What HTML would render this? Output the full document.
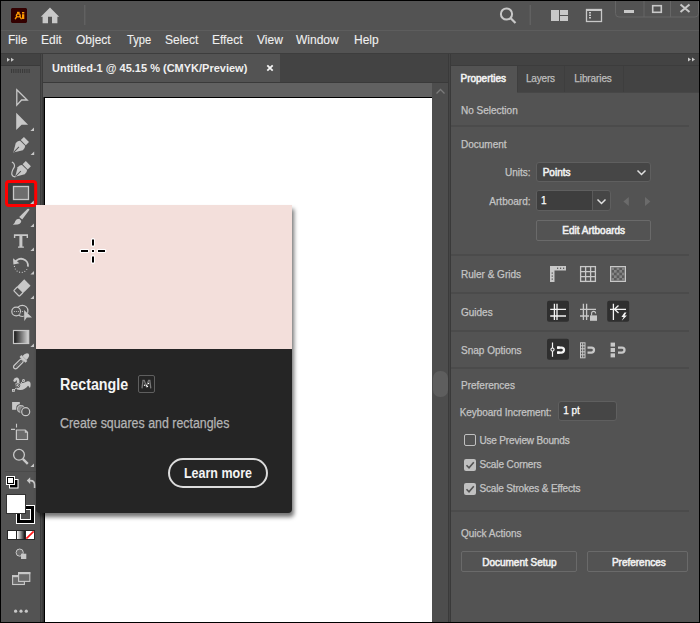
<!DOCTYPE html>
<html><head><meta charset="utf-8">
<style>
*{margin:0;padding:0;box-sizing:border-box}
html,body{width:700px;height:623px;overflow:hidden;background:#000}
body{position:relative;font-family:"Liberation Sans",sans-serif;color:#d4d4d4}
.a{position:absolute}
#app{position:absolute;left:1px;top:1px;width:698px;height:621px;background:#535353;overflow:hidden}
.t{position:absolute;white-space:nowrap;line-height:1;-webkit-text-stroke:0.25px currentColor}
</style></head><body>
<div id="app"></div>

<!-- title bar -->
<div class="a" style="left:1px;top:1px;width:698px;height:29px;background:#535353"></div>
<div class="a" style="left:1px;top:30px;width:698px;height:1px;background:#5d5d5d"></div>
<svg class="a" style="left:0;top:0" width="700" height="31" viewBox="0 0 700 31">
<path d="M12 8h14l1 1v13l-1 1h-14l-1-1v-13z" fill="#330000"/>
<rect x="17" y="11.8" width="2.6" height="2" fill="#ff9a00"/><ellipse cx="18.3" cy="15.4" rx="2" ry="1.5" fill="none" stroke="#ff9a00" stroke-width="1.3"/><path d="M16.9 16.4L15.4 18.6M19.7 16.4L21.2 18.6" stroke="#ff9a00" stroke-width="1.5" stroke-linecap="round"/>
<rect x="22" y="12" width="2.3" height="1.5" fill="#ff9a00"/><rect x="22" y="14.2" width="2.3" height="4.8" fill="#ff9a00"/>
<path d="M50 7.5l9.2 9.3h-1.8v6.4h-5.4v-6.4h-4v6.4h-5.4v-6.4h-1.8z" fill="#c8c8c8"/>
<rect x="84" y="5" width="1.5" height="20" fill="#616161"/>
<circle cx="506.5" cy="14" r="5.6" fill="none" stroke="#c8c8c8" stroke-width="2"/>
<path d="M510.5 18l5 5" stroke="#c8c8c8" stroke-width="2.2"/>
<rect x="529.5" y="5" width="1.5" height="20" fill="#616161"/>
<rect x="551" y="10" width="8" height="11" fill="#c8c8c8"/>
<rect x="560" y="10" width="8" height="5" fill="#c8c8c8"/>
<rect x="560" y="16" width="8" height="5" fill="#c8c8c8"/>
<rect x="586.5" y="9.5" width="15" height="12" fill="none" stroke="#c8c8c8" stroke-width="1.3"/>
<rect x="586" y="9" width="16" height="2" fill="#c8c8c8"/>
<rect x="589" y="12" width="2" height="1.5" fill="#c8c8c8"/><rect x="589" y="14.5" width="2" height="1.5" fill="#c8c8c8"/><rect x="589" y="17" width="2" height="1.5" fill="#c8c8c8"/>
<path d="M615.5 1v12.5a3.5 3.5 0 0 0 3.5 3.5h76a3.5 3.5 0 0 0 3.5-3.5v-12.5" fill="none" stroke="#666" stroke-width="1"/>
<rect x="643.5" y="1" width="1" height="16" fill="#666"/>
<rect x="670" y="1" width="1" height="16" fill="#666"/>
<rect x="624" y="10" width="10" height="3" fill="#c8c8c8"/>
<rect x="652.7" y="5.7" width="8.6" height="6.6" fill="none" stroke="#c8c8c8" stroke-width="1.6"/>
<path d="M680.5 4.5l9 7.5M689.5 4.5l-9 7.5" stroke="#c8c8c8" stroke-width="2"/>
</svg>
<!-- menu bar -->
<div class="a" style="left:1px;top:31px;width:698px;height:22px;background:#535353"></div>
<div class="t" style="left:8px;top:34px;font-size:12px;color:#f0f0f0;-webkit-text-stroke:0.1px currentColor">File</div>
<div class="t" style="left:41px;top:34px;font-size:12px;color:#f0f0f0;-webkit-text-stroke:0.1px currentColor">Edit</div>
<div class="t" style="left:76px;top:34px;font-size:12px;color:#f0f0f0;-webkit-text-stroke:0.1px currentColor">Object</div>
<div class="t" style="left:127px;top:34px;font-size:12px;color:#f0f0f0;-webkit-text-stroke:0.1px currentColor;transform:scaleX(.93);transform-origin:0 0">Type</div>
<div class="t" style="left:165px;top:34px;font-size:12px;color:#f0f0f0;-webkit-text-stroke:0.1px currentColor">Select</div>
<div class="t" style="left:212px;top:34px;font-size:12px;color:#f0f0f0;-webkit-text-stroke:0.1px currentColor">Effect</div>
<div class="t" style="left:257px;top:34px;font-size:12px;color:#f0f0f0;-webkit-text-stroke:0.1px currentColor">View</div>
<div class="t" style="left:296px;top:34px;font-size:12px;color:#f0f0f0;-webkit-text-stroke:0.1px currentColor">Window</div>
<div class="t" style="left:354px;top:34px;font-size:12px;color:#f0f0f0;-webkit-text-stroke:0.1px currentColor">Help</div>

<!-- toolbar -->
<div class="a" style="left:1px;top:53px;width:39px;height:12px;background:#434343"></div>
<div class="a" style="left:1px;top:65px;width:39px;height:1px;background:#3a3a3a"></div>
<div class="a" style="left:40px;top:53px;width:4px;height:569px;background:#494949;border-left:1px solid #3c3c3c;border-right:2px solid #3c3c3c"></div>

<svg class="a" style="left:0;top:0" width="45" height="623" viewBox="0 0 45 623">
<path d="M7 57.8l3 2l-3 2zM11 57.8l3 2l-3 2z" fill="#c8c8c8"/>
<g fill="#3a3a3a"><rect x="11.0" y="69" width="1.1" height="4"/><rect x="13.2" y="69" width="1.1" height="4"/><rect x="15.4" y="69" width="1.1" height="4"/><rect x="17.6" y="69" width="1.1" height="4"/><rect x="19.8" y="69" width="1.1" height="4"/><rect x="22.0" y="69" width="1.1" height="4"/><rect x="24.2" y="69" width="1.1" height="4"/><rect x="26.4" y="69" width="1.1" height="4"/><rect x="28.6" y="69" width="1.1" height="4"/></g>
<!-- selection -->
<path d="M16.8 89.8L27.2 100H21.6L16.8 105.2Z" fill="none" stroke="#c8c8c8" stroke-width="1.3" stroke-linejoin="miter"/>
<!-- direct selection -->
<path d="M16.2 112.8L28.1 124.7H21.6L16.2 130.1Z" fill="#c8c8c8"/>
<path d="M34 127.4v3.6h-3.6z" fill="#c8c8c8"/>
<!-- pen -->
<g transform="translate(13.3 152.6) rotate(45)">
<path d="M0 0L-5 -8.5Q-5.2 -11.8 -3.6 -13.2H3.6Q5.2 -11.8 5 -8.5Z" fill="#c8c8c8"/>
<rect x="-3.6" y="-18.6" width="7.2" height="4.5" fill="#c8c8c8"/>
<path d="M0 -0.8V-8" stroke="#535353" stroke-width="1"/>
</g>
<path d="M34.2 151.4v3.6h-3.6z" fill="#c8c8c8"/>
<!-- curvature -->
<g transform="translate(15.2 176.8) rotate(45)">
<path d="M0 0L-5 -8.5Q-5.2 -11.8 -3.6 -13.2H3.6Q5.2 -11.8 5 -8.5Z" fill="#c8c8c8"/>
<rect x="-3.6" y="-18.6" width="7.2" height="4.5" fill="#c8c8c8"/>
<path d="M0 -0.8V-8" stroke="#535353" stroke-width="1"/>
</g>
<path d="M12.3 162.2Q15.2 164 14.3 167.2Q11.2 172 11.9 174.8Q12.6 176.7 15 176.8" fill="none" stroke="#c8c8c8" stroke-width="1.2" stroke-linecap="round"/>
<!-- red selected box -->
<rect x="6.5" y="181.5" width="29.2" height="24" rx="2.5" fill="#3b3b3b" stroke="#ff0000" stroke-width="3"/>
<rect x="13.5" y="186.5" width="15" height="13" fill="#6d6d6d" stroke="#c8c8c8" stroke-width="1.3"/>
<path d="M33.8 200.4v3.6h-3.6z" fill="#c8c8c8"/>
<!-- brush -->
<path d="M27.4 209Q29 208.3 29.5 209.8L22.2 219.6L19.2 216.9Z" fill="#c8c8c8"/>
<path d="M19.3 218.8L21.2 220.7Q21.5 223.5 17.5 224.5L12.8 224.8Q15 223.3 15.3 221Q16.3 218.8 19.3 218.8Z" fill="#c8c8c8"/>
<path d="M34 223.4v3.6h-3.6z" fill="#c8c8c8"/>
<!-- type -->
<path d="M13.9 234.2H28V237.9H26.6V235.9H22.4V246.4H23.9V247.8H18V246.4H19.4V235.9H15.3V237.9H13.9Z" fill="#c8c8c8"/>
<path d="M34 247.4v3.6h-3.6z" fill="#c8c8c8"/>
<!-- rotate -->
<path d="M15.04 262.73A6.8 6.8 0 0 1 27.93 266.55" fill="none" stroke="#c8c8c8" stroke-width="1.9"/>
<path d="M13 258.3L13.4 264.6L19.4 263.2Z" fill="#c8c8c8"/>
<g fill="#c8c8c8"><circle cx="26.77" cy="269.50" r="0.6"/><circle cx="24.80" cy="271.37" r="0.6"/><circle cx="22.26" cy="272.32" r="0.6"/><circle cx="19.55" cy="272.20" r="0.6"/><circle cx="17.11" cy="271.03" r="0.6"/><circle cx="15.31" cy="269.00" r="0.6"/><circle cx="14.45" cy="266.43" r="0.6"/></g>
<path d="M34 274.5v-3.6h0v3.6h-3.6z" fill="#c8c8c8"/><path d="M34 270.9v3.6h-3.6z" fill="#c8c8c8"/>
<!-- eraser -->
<g transform="translate(21.4 288.5) rotate(45)">
<rect x="-4.5" y="-8.5" width="9" height="10" fill="#c8c8c8"/>
<rect x="-4" y="1.5" width="8" height="5.5" rx="0.8" fill="none" stroke="#c8c8c8" stroke-width="1.2"/>
</g>
<path d="M34 295.4v3.6h-3.6z" fill="#c8c8c8"/>
<!-- shape builder -->
<circle cx="22.3" cy="310.9" r="5.6" fill="none" stroke="#c8c8c8" stroke-width="1.2"/>
<circle cx="16.2" cy="311.5" r="4.4" fill="#535353" stroke="#c8c8c8" stroke-width="1.2"/>
<path d="M20.2 307.8A4.4 4.4 0 0 1 19.5 314.6" fill="none" stroke="#535353" stroke-width="0.6"/>
<g fill="#c8c8c8"><circle cx="14.4" cy="311.5" r=".6"/><circle cx="16.4" cy="311.5" r=".6"/><circle cx="18.4" cy="311.5" r=".6"/><circle cx="20.5" cy="311.5" r=".6"/><circle cx="22.5" cy="311.5" r=".6"/></g>
<path d="M24.1 310.1L32 317.5H26.8L24.3 321.1Z" fill="#c8c8c8" stroke="#535353" stroke-width="0.8" paint-order="stroke"/>
<!-- gradient -->
<defs><linearGradient id="gr" x1="0" x2="1"><stop offset="0" stop-color="#111"/><stop offset="1" stop-color="#d8d8d8"/></linearGradient></defs>
<rect x="13.5" y="330.5" width="15.2" height="13" fill="url(#gr)" stroke="#c8c8c8" stroke-width="1.2"/>
<path d="M34 343.4v3.6h-3.6z" fill="#c8c8c8"/>
<!-- eyedropper -->
<g transform="translate(13.4 369) rotate(45)">
<rect x="-2" y="-13" width="4" height="12" rx="2" fill="none" stroke="#c8c8c8" stroke-width="1.2"/>
<rect x="-4.2" y="-15.5" width="8.4" height="2.6" fill="#c8c8c8"/>
<path d="M-2.8 -15.5Q-3 -21 0 -21.5Q3 -21 2.8 -15.5Z" fill="#c8c8c8"/>
<path d="M0 -12V-3" stroke="#777" stroke-width="1.2" stroke-dasharray="1 0.8"/>
</g>
<!-- puppet warp -->
<path d="M14.6 380.6Q15.2 378.6 16.9 378.8Q18.6 379.3 18 383.5" fill="none" stroke="#c8c8c8" stroke-width="2.6" stroke-linecap="round"/>
<path d="M15.4 383.2L19.6 383.4Q24 383 27.5 381.3Q30.8 380.7 30.6 385Q30.4 388 29.8 388.1Q28.8 386.2 28 385.7Q25 389.8 20.5 390Q16.5 390.3 15.9 387.5Z" fill="#c8c8c8"/>
<path d="M14.2 390L23.5 380.5" stroke="#535353" stroke-width="0.9"/>
<path d="M13.8 390.4L16.3 387.8M20.5 383.5L22.6 381.4" stroke="#c8c8c8" stroke-width="0.9"/>
<circle cx="17.9" cy="385.7" r="1.9" fill="none" stroke="#535353" stroke-width="0.9"/>
<rect x="12" y="389" width="2.8" height="2.8" fill="#c8c8c8"/><rect x="12.9" y="389.9" width="1" height="1" fill="#777"/>
<circle cx="23.5" cy="380.5" r="1.5" fill="#c8c8c8"/><circle cx="23.5" cy="380.7" r="0.6" fill="#777"/>
<!-- blend -->
<rect x="12.1" y="402" width="7.7" height="7.8" fill="#c8c8c8"/>
<rect x="17.6" y="405.6" width="6.6" height="6.6" rx="2.4" fill="#8c8c8c" stroke="#535353" stroke-width="2.6"/>
<rect x="17.6" y="405.6" width="6.6" height="6.6" rx="2.4" fill="#8c8c8c" stroke="#c8c8c8" stroke-width="1"/>
<circle cx="25.7" cy="411.7" r="4.1" fill="#535353" stroke="#535353" stroke-width="2.8"/>
<circle cx="25.7" cy="411.7" r="4" fill="#535353" stroke="#c8c8c8" stroke-width="1.2"/>
<!-- artboard -->
<path d="M16.5 423.8V427.5M11 429.4H15" stroke="#c8c8c8" stroke-width="1.1"/>
<path d="M16.4 430H25.2L27.5 432.3V439.5H16.4Z" fill="#6b6b6b" stroke="#c8c8c8" stroke-width="1.2"/>
<path d="M24.8 430V432.7H27.5Z" fill="#c8c8c8"/>
<!-- zoom -->
<circle cx="19" cy="454.8" r="5.4" fill="none" stroke="#c8c8c8" stroke-width="1.3"/>
<path d="M22.8 458.8L27.8 463.8" stroke="#c8c8c8" stroke-width="2.4"/>
<path d="M34 463.4v3.6h-3.6z" fill="#c8c8c8"/>
<rect x="5" y="471" width="31" height="1" fill="#4a4a4a"/>
<!-- default fill stroke -->
<rect x="9" y="479" width="9.5" height="9.5" fill="#fff"/>
<rect x="10" y="480" width="7.5" height="7.5" fill="#000"/>
<rect x="6" y="476" width="9" height="9" fill="#fff"/>
<rect x="7" y="477" width="7" height="7" fill="#000"/>
<rect x="8" y="478" width="5" height="5" fill="#fff"/>
<!-- swap -->
<path d="M29 480.6H30.5Q34.6 480.6 34.6 485V488" fill="none" stroke="#c8c8c8" stroke-width="1.6"/>
<path d="M26.8 480.6L30.2 477.2V484Z" fill="#c8c8c8"/>
<!-- stroke swatch -->
<rect x="16" y="505" width="19" height="19" fill="#fff"/>
<rect x="17" y="506" width="17" height="17" fill="#000"/>
<rect x="20" y="509" width="11" height="11" fill="#fff"/>
<rect x="21" y="510" width="9" height="9" fill="#535353"/>
<!-- fill swatch -->
<rect x="6" y="494" width="20" height="20" fill="#333"/>
<rect x="7" y="495" width="18" height="18" fill="#fff"/>
<!-- color modes -->
<rect x="7" y="530" width="28" height="10" fill="#262626"/>
<rect x="8" y="531" width="8" height="8" fill="#fff"/>
<defs><linearGradient id="g2" x1="0" x2="1"><stop offset="0" stop-color="#fff"/><stop offset="1" stop-color="#111"/></linearGradient></defs>
<rect x="17" y="531" width="8" height="8" fill="url(#g2)"/>
<rect x="26" y="531" width="8" height="8" fill="#fff"/>
<path d="M26.3 538.7L33.7 531.3" stroke="#ff1a1a" stroke-width="1.7"/>
<!-- draw modes -->
<circle cx="19.7" cy="552.6" r="3.6" fill="#6b6b6b" stroke="#c8c8c8" stroke-width="1"/>
<rect x="21" y="553.7" width="5.3" height="5.3" fill="#c8c8c8"/>
<!-- screen modes -->
<rect x="12.6" y="575.7" width="11.8" height="8.8" fill="#6b6b6b" stroke="#c8c8c8" stroke-width="1.1"/>
<rect x="12" y="575.2" width="6.5" height="2" fill="#c8c8c8"/>
<rect x="18.6" y="572.6" width="11.2" height="8.8" fill="#6b6b6b" stroke="#c8c8c8" stroke-width="1.1"/>
<rect x="18" y="572" width="12.3" height="2.2" fill="#c8c8c8"/>
<!-- dots -->
<circle cx="15.6" cy="611.2" r="1.6" fill="#c8c8c8"/><circle cx="21" cy="611.2" r="1.6" fill="#c8c8c8"/><circle cx="26.3" cy="611.2" r="1.6" fill="#c8c8c8"/>
</svg>
<!-- doc tab bar -->
<div class="a" style="left:43px;top:53px;width:405px;height:29px;background:#434343"></div>
<div class="a" style="left:43px;top:54px;width:237px;height:28px;background:#535353"></div>
<div class="t" style="left:52px;top:63px;font-size:11px;font-weight:bold;color:#f0f0f0;-webkit-text-stroke:0;">Untitled-1 @ 45.15 % (CMYK/Preview)</div>
<svg class="a" style="left:264px;top:62px" width="12" height="12" viewBox="264 62 12 12"><path d="M267.3 65.3l5.4 5.4M272.7 65.3l-5.4 5.4" stroke="#f4f4f4" stroke-width="1.8"/></svg>
<div class="a" style="left:43px;top:82px;width:405px;height:1px;background:#3a3a3a"></div>
<div class="a" style="left:43px;top:83px;width:389px;height:14px;background:#616161"></div>
<!-- canvas -->
<div class="a" style="left:43px;top:97px;width:1px;height:525px;background:#333"></div>
<div class="a" style="left:44px;top:97px;width:388px;height:525px;background:#000"></div>
<div class="a" style="left:45px;top:98px;width:387px;height:524px;background:#fff"></div>
<!-- scrollbar -->
<div class="a" style="left:432px;top:83px;width:16px;height:539px;background:#4d4d4d"></div>
<div class="a" style="left:448px;top:53px;width:3px;height:569px;background:#454545;border-left:1px solid #3a3a3a;border-right:1px solid #3a3a3a"></div>

<!-- panel -->
<div class="a" style="left:451px;top:53px;width:248px;height:12px;background:#434343"></div>
<div class="a" style="left:451px;top:65px;width:248px;height:557px;background:#535353"></div>

<!-- panel content -->
<div class="a" style="left:451px;top:65px;width:248px;height:1px;background:#3c3c3c"></div>
<div class="a" style="left:517px;top:66px;width:182px;height:26px;background:#434343"></div>
<div class="a" style="left:517px;top:66px;width:1px;height:26px;background:#3e3e3e"></div>
<div class="a" style="left:564px;top:66px;width:1px;height:26px;background:#3e3e3e"></div>
<div class="a" style="left:623px;top:66px;width:1px;height:26px;background:#3e3e3e"></div>
<div class="a" style="left:517px;top:92px;width:182px;height:1px;background:#474747"></div>
<div class="t" style="top:74.2px;font-size:10px;color:#f2f2f2;left:460.5px;-webkit-text-stroke:0.55px currentColor;">Properties</div>
<div class="t" style="top:74.3px;font-size:10px;color:#bdbdbd;letter-spacing:-0.2px;left:526px;">Layers</div>
<div class="t" style="top:74.3px;font-size:10px;color:#bdbdbd;letter-spacing:-0.1px;left:574.3px;">Libraries</div>
<svg class="a" style="left:688px;top:57px" width="10" height="7"><path d="M0 0.4l3 2.1l-3 2.1zM4 0.4l3 2.1l-3 2.1z" fill="#c8c8c8"/></svg>
<div class="a" style="left:451px;top:125px;width:238px;height:2px;background:#4b4b4b"></div>
<div class="a" style="left:451px;top:254px;width:238px;height:2px;background:#4b4b4b"></div>
<div class="a" style="left:451px;top:292px;width:238px;height:2px;background:#4b4b4b"></div>
<div class="a" style="left:451px;top:330px;width:238px;height:2px;background:#4b4b4b"></div>
<div class="a" style="left:451px;top:367px;width:238px;height:2px;background:#4b4b4b"></div>
<div class="a" style="left:451px;top:510px;width:238px;height:2px;background:#4b4b4b"></div>
<div class="t" style="top:105.53px;font-size:10px;color:#c4c4c4;left:461px;">No Selection</div>
<div class="t" style="top:139.63px;font-size:10px;color:#c4c4c4;left:461px;">Document</div>
<div class="t" style="top:167.73px;font-size:10px;color:#c4c4c4;right:169.5px;">Units:</div>
<div class="a" style="left:536px;top:162px;width:115px;height:20px;background:#464646;border:1px solid #5f5f5f;border-radius:3px"></div>
<div class="t" style="top:167.53px;font-size:10px;color:#f0f0f0;left:542.7px;-webkit-text-stroke:0.55px currentColor;">Points</div>
<svg class="a" style="left:636px;top:169px" width="11" height="8"><path d="M1.5 1.5l4 4l4-4" fill="none" stroke="#e0e0e0" stroke-width="1.5"/></svg>
<div class="t" style="top:197px;font-size:10px;color:#c4c4c4;right:169.5px;">Artboard:</div>
<div class="a" style="left:536px;top:190px;width:75px;height:21px;background:#464646;border:1px solid #5f5f5f;border-radius:3px"></div>
<div class="a" style="left:537px;top:191px;width:56px;height:19px;background:#3e3e3e;border-radius:2px 0 0 2px;border-right:1px solid #5a5a5a"></div>
<div class="t" style="top:196px;font-size:10px;color:#fff;left:541px;">1</div>
<svg class="a" style="left:596px;top:198px" width="11" height="8"><path d="M1.5 1.5l4 4l4-4" fill="none" stroke="#e0e0e0" stroke-width="1.5"/></svg>
<svg class="a" style="left:620px;top:195px" width="34" height="13"><path d="M8.8 2v9l-5.4-4.5z" fill="#6b6b6b"/><path d="M25 2v9l5.4-4.5z" fill="#6b6b6b"/></svg>
<div class="a" style="left:536px;top:219.5px;width:115px;height:21px;border:1px solid #6a6a6a;border-radius:2px"></div>
<div class="t" style="top:226px;font-size:10px;color:#f0f0f0;left:562.3px;-webkit-text-stroke:0.55px currentColor;">Edit Artboards</div>
<div class="t" style="top:270px;font-size:10px;color:#c4c4c4;left:461px;">Ruler &amp; Grids</div>
<div class="t" style="top:307.54px;font-size:10px;color:#c4c4c4;left:461px;">Guides</div>
<div class="t" style="top:346px;font-size:10px;color:#c4c4c4;left:461px;">Snap Options</div>
<div class="t" style="top:381px;font-size:10px;color:#c4c4c4;left:461px;">Preferences</div>
<div class="t" style="top:407.64px;font-size:10px;color:#c4c4c4;letter-spacing:-0.05px;left:459.7px;">Keyboard Increment:</div>
<div class="a" style="left:558px;top:401px;width:59px;height:20px;background:#464646;border:1px solid #5f5f5f;border-radius:3px"></div>
<div class="t" style="top:406px;font-size:10px;color:#fff;left:563.2px;">1 pt</div>
<div class="a" style="left:463.5px;top:434px;width:12px;height:12px;border:1px solid #c0c0c0;border-radius:2px"></div>
<div class="t" style="top:436px;font-size:10px;color:#c4c4c4;letter-spacing:-0.15px;left:479.4px;">Use Preview Bounds</div>
<div class="a" style="left:463.5px;top:458.5px;width:12px;height:12px;background:#c0c0c0;border-radius:2px"></div>
<svg class="a" style="left:463.5px;top:458.5px" width="12" height="12"><path d="M2.5 6.2l2.5 2.6l4.8-5.6" fill="none" stroke="#535353" stroke-width="1.6"/></svg>
<div class="a" style="left:463.5px;top:482.5px;width:12px;height:12px;background:#c0c0c0;border-radius:2px"></div>
<svg class="a" style="left:463.5px;top:482.5px" width="12" height="12"><path d="M2.5 6.2l2.5 2.6l4.8-5.6" fill="none" stroke="#535353" stroke-width="1.6"/></svg>
<div class="t" style="top:459.54px;font-size:10px;color:#c4c4c4;letter-spacing:-0.1px;left:479.4px;">Scale Corners</div>
<div class="t" style="top:483.54px;font-size:10px;color:#c4c4c4;letter-spacing:-0.15px;left:479.4px;">Scale Strokes &amp; Effects</div>
<div class="t" style="top:529px;font-size:10px;color:#c4c4c4;left:461px;">Quick Actions</div>
<div class="a" style="left:461px;top:551px;width:116px;height:21px;border:1px solid #6a6a6a;border-radius:2px"></div>
<div class="t" style="top:557.53px;font-size:10px;color:#f0f0f0;left:482.2px;-webkit-text-stroke:0.55px currentColor;">Document Setup</div>
<div class="a" style="left:587px;top:551px;width:101px;height:21px;border:1px solid #6a6a6a;border-radius:2px"></div>
<div class="t" style="top:557.53px;font-size:10px;color:#f0f0f0;left:611.9px;-webkit-text-stroke:0.55px currentColor;">Preferences</div>
<svg class="a" style="left:430px;top:80px" width="270" height="300" viewBox="430 80 270 300">
<!-- scrollbar up arrow -->
<path d="M436.5 93.5l4-4l4 4" fill="none" stroke="#7a7a7a" stroke-width="1.3"/>

<!-- ruler -->
<path d="M550 266H566V270.5H554.5V282H550Z" fill="#c8c8c8"/>
<g fill="#535353"><rect x="557" y="267.6" width="1.2" height="1.3"/><rect x="560" y="267.6" width="1.2" height="1.3"/><rect x="563" y="267.6" width="1.2" height="1.3"/>
<rect x="551.6" y="272.5" width="1.3" height="1.2"/><rect x="551.6" y="275.5" width="1.3" height="1.2"/><rect x="551.6" y="278.5" width="1.3" height="1.2"/></g>
<!-- grid -->
<g fill="none" stroke="#c8c8c8" stroke-width="1.3"><rect x="580.6" y="266.6" width="14.8" height="14.8"/><path d="M585.6 266.6V281.4M590.6 266.6V281.4M580.6 271.6H595.4M580.6 276.6H595.4"/></g>
<!-- checker -->
<rect x="610" y="266" width="16" height="16" fill="#c8c8c8"/>
<rect x="611.3" y="267.3" width="13.4" height="13.4" fill="#5a5a5a"/>
<g fill="#858585"><rect x="611.30" y="267.30" width="2.68" height="2.68"/><rect x="611.30" y="272.66" width="2.68" height="2.68"/><rect x="611.30" y="278.02" width="2.68" height="2.68"/><rect x="613.98" y="269.98" width="2.68" height="2.68"/><rect x="613.98" y="275.34" width="2.68" height="2.68"/><rect x="616.66" y="267.30" width="2.68" height="2.68"/><rect x="616.66" y="272.66" width="2.68" height="2.68"/><rect x="616.66" y="278.02" width="2.68" height="2.68"/><rect x="619.34" y="269.98" width="2.68" height="2.68"/><rect x="619.34" y="275.34" width="2.68" height="2.68"/><rect x="622.02" y="267.30" width="2.68" height="2.68"/><rect x="622.02" y="272.66" width="2.68" height="2.68"/><rect x="622.02" y="278.02" width="2.68" height="2.68"/></g>
<!-- guide buttons -->
<rect x="547" y="300.7" width="22" height="21" rx="2" fill="#2f2f2f"/>
<g stroke="#f4f4f4" stroke-width="1.3"><path d="M554.4 303.8V320M557 303.8V320M550.2 309.3H566M550.2 316H566"/></g>
<g stroke="#c8c8c8" stroke-width="1.3"><path d="M583.4 303.8V320M586.6 303.8V320M580 309.3H596M580 316H589"/></g>
<rect x="590" y="315.4" width="7" height="5.4" fill="#c8c8c8"/>
<path d="M591.6 315.4V313.4A2 2 0 0 1 595.6 313.4" fill="none" stroke="#c8c8c8" stroke-width="1.1"/>
<rect x="607.2" y="300.7" width="22" height="21" rx="2" fill="#2f2f2f"/>
<g stroke="#f4f4f4" stroke-width="1.3" fill="none"><path d="M613.4 303.8V320M610 309.3H626M614.5 309.3L618.5 305.5M614.5 309.3L618.5 313"/></g>
<path d="M624.5 312.6L621.4 317H623.6L621.8 320.8L626.9 315.6H624.6L626.5 312.6Z" fill="#f4f4f4"/>
<!-- snap buttons -->
<rect x="547" y="338.7" width="22" height="21" rx="2" fill="#2f2f2f"/>
<path d="M552.5 342.5V356.8" stroke="#f4f4f4" stroke-width="1.2"/>
<circle cx="552.5" cy="349.6" r="1.6" fill="#2f2f2f" stroke="#f4f4f4" stroke-width="1.1"/>
<path d="M557.5 347.6H561.5A2.5 2.5 0 0 1 561.5 352.6H557.5" fill="none" stroke="#f4f4f4" stroke-width="2.3"/><rect x="557" y="346.4" width="2.6" height="2.4" fill="#fff"/><rect x="557" y="351.4" width="2.6" height="2.4" fill="#fff"/>
<g fill="none" stroke="#c8c8c8" stroke-width="1"><rect x="580.5" y="342.8" width="4.5" height="15"/><path d="M580.5 345.8H585M580.5 348.8H585M580.5 351.8H585M580.5 354.8H585M582.7 342.8V357.8"/></g>
<path d="M587.5 347.6H591.5A2.5 2.5 0 0 1 591.5 352.6H587.5" fill="none" stroke="#c8c8c8" stroke-width="2.3"/>
<g fill="#c8c8c8"><rect x="610.6" y="342.6" width="4.4" height="4"/><rect x="610.6" y="348" width="4.4" height="4"/><rect x="610.6" y="353.4" width="4.4" height="4"/></g>
<path d="M618 347.6H622A2.5 2.5 0 0 1 622 352.6H618" fill="none" stroke="#c8c8c8" stroke-width="2.3"/>
</svg>
<div class="a" style="left:433px;top:371px;width:14.5px;height:25.5px;border-radius:7px;background:#5e5e5e"></div>
<div class="a" style="left:1px;top:53px;width:698px;height:1px;background:#3d3d3d"></div>
<!-- popup -->
<div class="a" style="left:36px;top:205px;width:256px;height:308px;background:#252525;border-radius:0 0 4px 4px;box-shadow:2px 4px 4px rgba(0,0,0,.55);overflow:hidden">
  <div class="a" style="left:0;top:0;width:256px;height:144px;background:#f3dfdb"></div>
</div>
<svg class="a" style="left:78px;top:236px" width="30" height="30" viewBox="78 236 30 30">
<g stroke="#fff" stroke-width="4" stroke-linecap="round">
<path d="M93 240v5M93 257v5M81.5 251h6M98.5 251h6M93 251h0"/>
</g>
<g stroke="#000" stroke-width="2" stroke-linecap="butt">
<path d="M93 239.5v6M93 256.5v6M81 251h7M98 251h7"/>
</g>
<rect x="91" y="249" width="4" height="4" rx="1.2" fill="#fff"/><rect x="92" y="250" width="2" height="2" fill="#000"/>
</svg>
<div class="t" style="left:60.4px;top:376px;font-size:16.5px;font-weight:bold;color:#f4f4f4;transform:scaleX(0.865);transform-origin:0 0;-webkit-text-stroke:0;">Rectangle</div>
<div class="a" style="left:137.6px;top:375.4px;width:17.3px;height:17.3px;border:1.5px solid #5f5f5f;border-radius:2px"></div>
<svg class="a" style="left:137px;top:375px" width="18" height="18" viewBox="137 375 18 18"><path d="M142 388.4l1-8h1.2l2.2 6 2.2-6h1.2l1 8" fill="none" stroke="#7a7a7a" stroke-width="1.3"/><circle cx="144.5" cy="385.3" r=".7" fill="#fff"/><circle cx="146.5" cy="385.8" r=".7" fill="#fff"/><circle cx="147.5" cy="386.5" r=".7" fill="#fff"/><circle cx="148.5" cy="383.5" r=".7" fill="#fff"/></svg>
<div class="t" style="left:60.3px;top:416.2px;font-size:14px;color:#b4b4b4;transform:scaleX(0.885);transform-origin:0 0">Create squares and rectangles</div>
<div class="a" style="left:167.6px;top:458.3px;width:100.4px;height:30.1px;border:2px solid #dcdcdc;border-radius:16px"></div>
<div class="t" style="left:183.7px;top:466px;font-size:14.5px;font-weight:bold;color:#f4f4f4;transform:scaleX(0.86);transform-origin:0 0;-webkit-text-stroke:0;">Learn more</div>

</body></html>
